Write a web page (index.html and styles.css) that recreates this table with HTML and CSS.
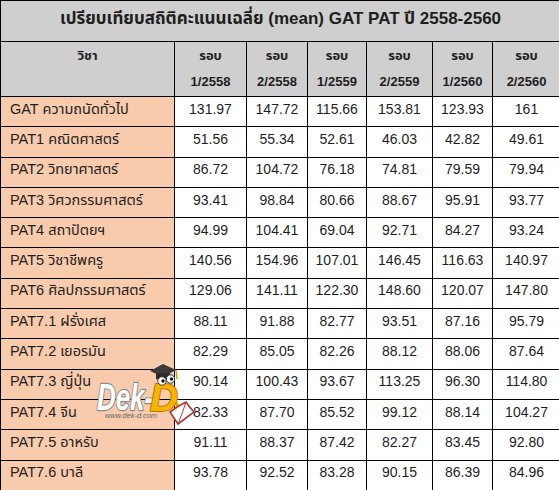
FILE: index.html
```html
<!DOCTYPE html>
<html lang="th">
<head>
<meta charset="utf-8">
<title>เปรียบเทียบสถิติคะแนนเฉลี่ย GAT PAT</title>
<link rel="stylesheet" href="styles.css">
</head>
<body>
<div class="wrap">
<table class="stats">
  <colgroup>
    <col class="c-subj"><col class="c2"><col class="c3"><col class="c4"><col class="c5"><col class="c6"><col class="c7">
  </colgroup>
  <tr class="title"><td colspan="7">เปรียบเทียบสถิติคะแนนเฉลี่ย (mean) GAT PAT ปี 2558-2560</td></tr>
  <tr class="head">
    <th>วิชา<br>&nbsp;</th>
    <th>รอบ<br>1/2558</th>
    <th>รอบ<br>2/2558</th>
    <th>รอบ<br>1/2559</th>
    <th>รอบ<br>2/2559</th>
    <th>รอบ<br>1/2560</th>
    <th>รอบ<br>2/2560</th>
  </tr>
  <tr><td class="subj">GAT ความถนัดทั่วไป</td><td>131.97</td><td>147.72</td><td>115.66</td><td>153.81</td><td>123.93</td><td>161</td></tr>
  <tr><td class="subj">PAT1 คณิตศาสตร์</td><td>51.56</td><td>55.34</td><td>52.61</td><td>46.03</td><td>42.82</td><td>49.61</td></tr>
  <tr><td class="subj">PAT2 วิทยาศาสตร์</td><td>86.72</td><td>104.72</td><td>76.18</td><td>74.81</td><td>79.59</td><td>79.94</td></tr>
  <tr><td class="subj">PAT3 วิศวกรรมศาสตร์</td><td>93.41</td><td>98.84</td><td>80.66</td><td>88.67</td><td>95.91</td><td>93.77</td></tr>
  <tr><td class="subj">PAT4 สถาปัตยฯ</td><td>94.99</td><td>104.41</td><td>69.04</td><td>92.71</td><td>84.27</td><td>93.24</td></tr>
  <tr><td class="subj">PAT5 วิชาชีพครู</td><td>140.56</td><td>154.96</td><td>107.01</td><td>146.45</td><td>116.63</td><td>140.97</td></tr>
  <tr><td class="subj">PAT6 ศิลปกรรมศาสตร์</td><td>129.06</td><td>141.11</td><td>122.30</td><td>148.60</td><td>120.07</td><td>147.80</td></tr>
  <tr><td class="subj">PAT7.1 ฝรั่งเศส</td><td>88.11</td><td>91.88</td><td>82.77</td><td>93.51</td><td>87.16</td><td>95.79</td></tr>
  <tr><td class="subj">PAT7.2 เยอรมัน</td><td>82.29</td><td>85.05</td><td>82.26</td><td>88.12</td><td>88.06</td><td>87.64</td></tr>
  <tr><td class="subj">PAT7.3 ญี่ปุ่น</td><td>90.14</td><td>100.43</td><td>93.67</td><td>113.25</td><td>96.30</td><td>114.80</td></tr>
  <tr><td class="subj">PAT7.4 จีน</td><td>82.33</td><td>87.70</td><td>85.52</td><td>99.12</td><td>88.14</td><td>104.27</td></tr>
  <tr><td class="subj">PAT7.5 อาหรับ</td><td>91.11</td><td>88.37</td><td>87.42</td><td>82.27</td><td>83.45</td><td>92.80</td></tr>
  <tr><td class="subj">PAT7.6 บาลี</td><td>93.78</td><td>92.52</td><td>83.28</td><td>90.15</td><td>86.39</td><td>84.96</td></tr>
</table>

<svg class="logo" width="112" height="90" viewBox="0 0 112 90" aria-label="Dek-D www.dek-d.com">
  <!-- Dek- text -->
  <text x="7" y="50" class="logo-main" textLength="56" lengthAdjust="spacingAndGlyphs">Dek-</text>
  <!-- arm and book -->
  <path d="M82 40 Q88 44 90 50" stroke="#e0a400" stroke-width="3" fill="none" stroke-linecap="round"/>
  <path d="M80 52 Q88 46 96 42 Q100 48 104 52 Q96 58 88 64 Q84 58 80 52 Z" fill="#fff" stroke="#a83a3a" stroke-width="1.6"/>
  <path d="M88 64 Q92 54 96 42" stroke="#a83a3a" stroke-width="1" fill="none"/>
  <!-- yellow D mascot -->
  <text x="60" y="51" class="logo-d" textLength="28" lengthAdjust="spacingAndGlyphs">D</text>
  <!-- graduation cap -->
  <polygon points="60,11 73,4 86,10 73,17" fill="#3a3a3a"/>
  <path d="M66 14 L66 19 Q73 22 80 18 L80 13" fill="#2a2a2a"/>
  <line x1="86" y1="10" x2="87" y2="19" stroke="#d4a000" stroke-width="1.5"/>
  <circle cx="72" cy="21" r="4.2" fill="#fff" stroke="#333" stroke-width="1"/>
  <circle cx="80.5" cy="19" r="4.2" fill="#fff" stroke="#333" stroke-width="1"/>
  <circle cx="73" cy="21" r="1.7" fill="#111"/>
  <circle cx="81.5" cy="19" r="1.7" fill="#111"/>
  <text x="15" y="58" class="logo-url" textLength="52" lengthAdjust="spacingAndGlyphs">www.dek-d.com</text>
</svg>
</div>
</body>
</html>
```

FILE: styles.css
```css
html, body {
  margin: 0;
  padding: 0;
  background: #ffffff;
}

.wrap {
  position: relative;
  width: 559px;
  height: 490px;
  overflow: hidden;
}

.stats {
  border-collapse: collapse;
  table-layout: fixed;
  width: 560px;
  font-family: "Liberation Sans", Arial, "Noto Sans Thai", "Noto Sans", sans-serif;
  color: #1e1e1e;
}

.c-subj { width: 174px; }
.c2 { width: 72px; }
.c3 { width: 61px; }
.c4 { width: 59px; }
.c5 { width: 66px; }
.c6 { width: 60px; }
.c7 { width: 68px; }

.stats td,
.stats th {
  border: 1px solid #000;
  padding: 0;
  text-align: center;
  vertical-align: middle;
  font-size: 14px;
}

.title td {
  height: 41px;
  background: #cfcfcf;
  font-size: 17px;
  font-weight: bold;
  vertical-align: top;
  padding-top: 5px;
  box-sizing: border-box;
}

.head th {
  height: 55px;
  background: #cfcfcf;
  font-size: 13px;
  font-weight: bold;
  line-height: 26px;
  box-sizing: border-box;
}

.stats tr:not(.title):not(.head) td {
  height: 30.3px;
  padding-bottom: 6px;
  box-sizing: border-box;
  line-height: 18px;
}

.stats td.subj {
  background: #f8cbad;
  text-align: left;
  padding-left: 9px;
  font-size: 14.5px;
}

.logo {
  position: absolute;
  left: 90px;
  top: 360px;
}

.logo-main {
  font-family: "Liberation Sans", Arial, sans-serif;
  font-size: 36px;
  font-weight: bold;
  font-style: italic;
  fill: #ffffff;
  stroke: #8c8c8c;
  stroke-width: 2.4px;
  stroke-linejoin: round;
  paint-order: stroke fill;
}

.logo-d {
  font-family: "Liberation Sans", Arial, sans-serif;
  font-size: 38px;
  font-weight: bold;
  font-style: italic;
  fill: #f4b400;
  stroke: #c47a00;
  stroke-width: 2px;
  stroke-linejoin: round;
  paint-order: stroke fill;
}

.logo-url {
  font-family: "Liberation Sans", Arial, sans-serif;
  font-size: 7.5px;
  font-style: italic;
  fill: #666;
}
```
